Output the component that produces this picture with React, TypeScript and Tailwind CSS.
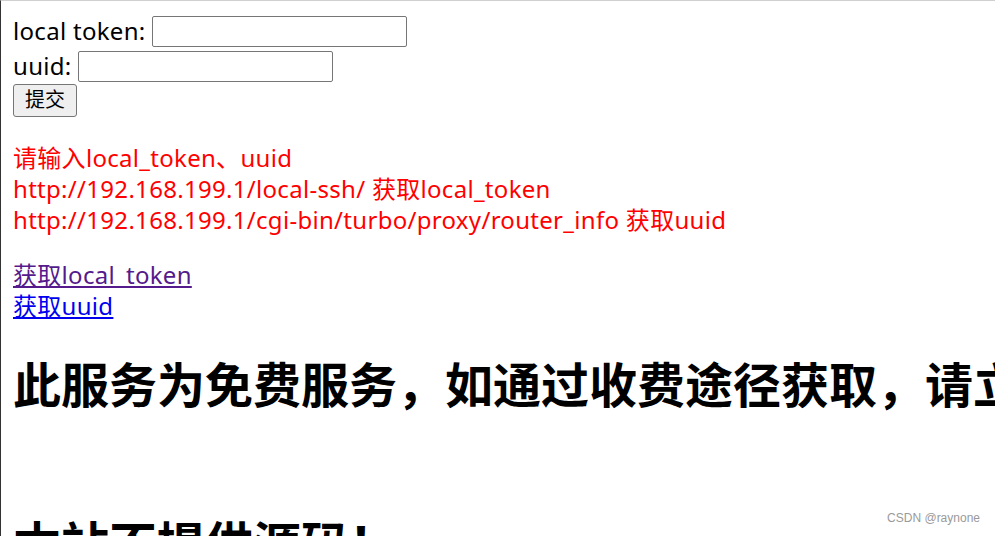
import React from "react";

const font = { fontFamily: '"Noto Sans", "Noto Sans CJK SC", sans-serif' };

export default function App() {
  return (
    <div
      className="relative w-[995px] h-[536px] overflow-hidden bg-white border-l border-l-[#333] border-t border-t-[#d0d0d0] text-black"
      style={font}
    >
      <div className="pl-[12px] pt-[13px] text-[24px] leading-[31px] tracking-[0.3px]">
        <div className="flex items-center h-[35px] whitespace-nowrap">
          <span className="-mt-[3px]">local token:</span>
          <span className="ml-[6px] w-[255px] h-[31px] border border-[#767676] rounded-[2px] bg-white" />
        </div>
        <div className="flex items-center h-[34px] whitespace-nowrap">
          <span className="-mt-[2px]">uuid:</span>
          <span className="ml-[6px] w-[255px] h-[31px] border border-[#767676] rounded-[2px] bg-white" />
        </div>
        <div className="flex items-center h-[34px]">
          <button className="w-[64px] h-[33px] border border-[#767676] rounded-[3px] bg-[#efefef] text-[20px] leading-none tracking-normal flex items-center justify-center">
            提交
          </button>
        </div>

        <div className="mt-[25px] text-[#ff0000] whitespace-nowrap">
          <div>请输入local_token、uuid</div>
          <div>http://192.168.199.1/local-ssh/ 获取local_token</div>
          <div>http://192.168.199.1/cgi-bin/turbo/proxy/router_info 获取uuid</div>
        </div>

        <div className="mt-[24px] whitespace-nowrap">
          <div>
            <a className="text-[#551a8b] underline" href="#">获取local_token</a>
          </div>
          <div>
            <a className="text-[#0000ee] underline" href="#">获取uuid</a>
          </div>
        </div>

        <h1 className="mt-[32px] text-[48px] font-bold leading-[63px] tracking-normal whitespace-nowrap">
          此服务为免费服务，如通过收费途径获取，请立即举报！
        </h1>
        <h1 className="mt-[96px] text-[48px] font-bold leading-[63px] tracking-normal whitespace-nowrap">
          本站不提供源码！
        </h1>
      </div>

      <div className="absolute right-[15px] bottom-[9px] text-[12px] text-[#9a9a9a]" style={{ fontFamily: '"Liberation Sans", Arial, sans-serif' }}>
        CSDN @raynone
      </div>
    </div>
  );
}
